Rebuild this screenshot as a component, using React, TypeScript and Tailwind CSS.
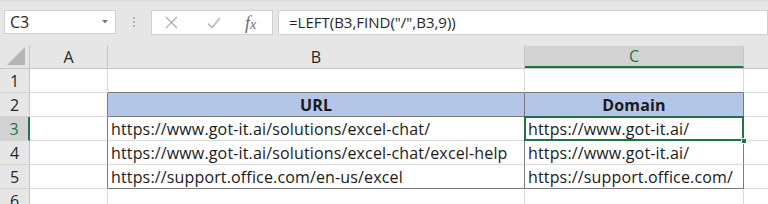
import React from "react";

const font = "font-['Open_Sans',_'Liberation_Sans',_sans-serif]";

function RowHeader({ n, active }: { n: number; active?: boolean }) {
  return (
    <div
      className={
        "w-[30px] shrink-0 flex items-center justify-center text-[16px] tracking-normal border-b border-[#d4d4d4] " +
        (active
          ? "bg-[#d2d2d2] text-[#217346] border-r-2 border-r-[#217346]"
          : "bg-[#e6e6e6] text-[#262626] border-r border-r-[#c6c6c6]")
      }
    >
      {n}
    </div>
  );
}

export default function App() {
  const grid = "border-[#dadada]";
  const dark = "border-[#7a7a7a]";
  return (
    <div className={"w-[768px] h-[204px] overflow-hidden bg-white " + font}>
      {/* formula bar area */}
      <div className="h-[45px] bg-[#e6e6e6] flex items-start pt-[10px] pl-[4px] border-t-2 border-t-[#dcdcdc]">
        <div className="w-[112px] h-[24px] bg-white border border-[#d0d0d0] flex items-center justify-between pl-[5px] pr-[7px] text-[16px] text-[#262626] -mt-[2px]">
          <span>C3</span>
          <svg width="6" height="4" viewBox="0 0 6 4"><path d="M0 0h6L3 3.5z" fill="#7a7a7a" /></svg>
        </div>
        <div className="w-[35px] h-[24px] -mt-[2px] flex flex-col items-center justify-center gap-[2px]">
          <span className="w-[2px] h-[2px] bg-[#b0b0b0]" />
          <span className="w-[2px] h-[2px] bg-[#b0b0b0]" />
          <span className="w-[2px] h-[2px] bg-[#b0b0b0]" />
        </div>
        <div className="w-[122px] h-[25px] -mt-[2px] bg-white border border-[#d0d0d0] flex items-center relative">
          <svg className="absolute left-[13px] top-[5px]" width="13" height="13" viewBox="0 0 13 13">
            <path d="M1 1L12 12M12 1L1 12" stroke="#b0b0b0" strokeWidth="1.3" />
          </svg>
          <svg className="absolute left-[55px] top-[6px]" width="14" height="12" viewBox="0 0 14 12">
            <path d="M1 6.5L5 10.5L13 1" stroke="#b8b8b8" strokeWidth="1.6" fill="none" />
          </svg>
          <span className="absolute left-[93px] -top-[1px] text-[18px] italic text-[#6a6a6a] font-['Liberation_Serif',_serif]">
            f<span className="text-[14px]">x</span>
          </span>
        </div>
        <div className="flex-1 h-[25px] -mt-[2px] ml-[5px] bg-white border border-[#d0d0d0] flex items-center pl-[10px] text-[15px] text-[#262626]">
          =LEFT(B3,FIND("/",B3,9))
        </div>
      </div>

      {/* column headers */}
      <div className="h-[24px] flex bg-[#e6e6e6] text-[16px] text-[#262626] border-b border-[#c6c6c6]">
        <div className="w-[30px] shrink-0 relative border-r border-[#c6c6c6]">
          <svg className="absolute right-[4px] bottom-[3px]" width="18" height="18" viewBox="0 0 18 18">
            <path d="M18 0V18H0z" fill="#b4b4b4" />
          </svg>
        </div>
        <div className="w-[78px] shrink-0 flex items-center justify-center border-r border-[#c6c6c6]">A</div>
        <div className="w-[417px] shrink-0 flex items-center justify-center border-r border-[#c6c6c6]">B</div>
        <div className="w-[219px] shrink-0 flex items-center justify-center bg-[#d2d2d2] text-[#217346] border-b-2 border-[#217346] border-r border-r-[#c6c6c6] mt-[1px]">C</div>
        <div className="flex-1" />
      </div>

      {/* rows */}
      <div className="text-[16px] tracking-[0.15px] text-[#1a1a1a]">
        {/* row 1 */}
        <div className="h-[24px] flex">
          <RowHeader n={1} />
          <div className={"w-[78px] shrink-0 border-r border-b " + grid} />
          <div className={"w-[417px] shrink-0 border-r border-b " + grid + " border-b-[#7a7a7a]"} />
          <div className={"w-[219px] shrink-0 border-r border-b " + grid + " border-b-[#7a7a7a]"} />
          <div className={"flex-1 border-b " + grid} />
        </div>
        {/* row 2 */}
        <div className="h-[24px] flex">
          <RowHeader n={2} />
          <div className={"w-[78px] shrink-0 border-r border-b " + grid + " border-r-[#7a7a7a]"} />
          <div className={"w-[417px] shrink-0 border-r border-b bg-[#b4c6e7] font-bold flex items-center justify-center " + dark}>URL</div>
          <div className={"w-[219px] shrink-0 border-r border-b bg-[#b4c6e7] font-bold flex items-center justify-center " + dark}>Domain</div>
          <div className={"flex-1 border-b " + grid} />
        </div>
        {/* row 3 */}
        <div className="h-[24px] flex">
          <RowHeader n={3} active />
          <div className={"w-[78px] shrink-0 border-r border-b " + grid + " border-r-[#7a7a7a]"} />
          <div className={"w-[417px] shrink-0 border-r border-b flex items-center pl-[3px] " + grid + " border-r-[#7a7a7a]"}>https://www.got-it.ai/solutions/excel-chat/</div>
          <div className={"w-[219px] shrink-0 border-r border-b flex items-center pl-[3px] relative " + grid + " border-r-[#7a7a7a]"}>
            https://www.got-it.ai/
            <div className="absolute -left-[1px] -top-[1px] -right-[1px] -bottom-[1px] border-2 border-[#217346]" />
            <div className="absolute -right-[4px] -bottom-[4px] w-[6px] h-[6px] bg-[#217346] border border-white" />
          </div>
          <div className={"flex-1 border-b " + grid} />
        </div>
        {/* row 4 */}
        <div className="h-[24px] flex">
          <RowHeader n={4} />
          <div className={"w-[78px] shrink-0 border-r border-b " + grid + " border-r-[#7a7a7a]"} />
          <div className={"w-[417px] shrink-0 border-r border-b flex items-center pl-[3px] " + grid + " border-r-[#7a7a7a]"}>https://www.got-it.ai/solutions/excel-chat/excel-help</div>
          <div className={"w-[219px] shrink-0 border-r border-b flex items-center pl-[3px] " + grid + " border-r-[#7a7a7a]"}>https://www.got-it.ai/</div>
          <div className={"flex-1 border-b " + grid} />
        </div>
        {/* row 5 */}
        <div className="h-[24px] flex">
          <RowHeader n={5} />
          <div className={"w-[78px] shrink-0 border-r border-b " + grid + " border-r-[#7a7a7a]"} />
          <div className={"w-[417px] shrink-0 border-r border-b flex items-center pl-[3px] " + dark}>https://support.office.com/en-us/excel</div>
          <div className={"w-[219px] shrink-0 border-r border-b flex items-center pl-[3px] " + dark}>https://support.office.com/</div>
          <div className={"flex-1 border-b " + grid} />
        </div>
        {/* row 6 */}
        <div className="h-[24px] flex">
          <RowHeader n={6} />
          <div className={"w-[78px] shrink-0 border-r border-b " + grid} />
          <div className={"w-[417px] shrink-0 border-r border-b " + grid} />
          <div className={"w-[219px] shrink-0 border-r border-b " + grid} />
          <div className={"flex-1 border-b " + grid} />
        </div>
      </div>
    </div>
  );
}
